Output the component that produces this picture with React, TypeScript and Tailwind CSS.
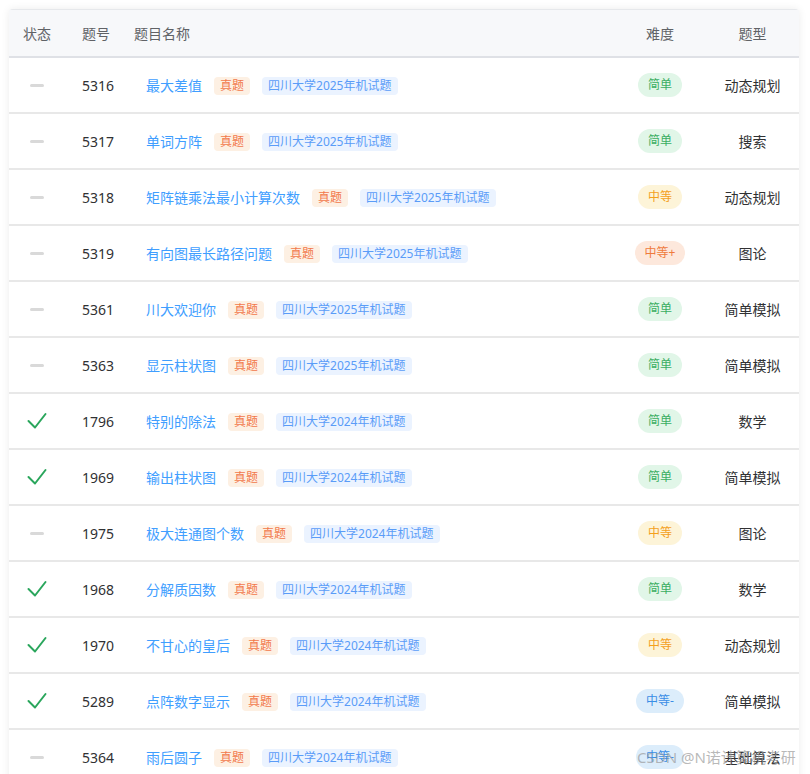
type Level = '简单' | '中等' | '中等+' | '中等-';

interface Problem {
  done: boolean;
  id: number;
  title: string;
  year: number;
  level: Level;
  kind: string;
}

const PROBLEMS: Problem[] = [
  { done: false, id: 5316, title: '最大差值', year: 2025, level: '简单', kind: '动态规划' },
  { done: false, id: 5317, title: '单词方阵', year: 2025, level: '简单', kind: '搜索' },
  { done: false, id: 5318, title: '矩阵链乘法最小计算次数', year: 2025, level: '中等', kind: '动态规划' },
  { done: false, id: 5319, title: '有向图最长路径问题', year: 2025, level: '中等+', kind: '图论' },
  { done: false, id: 5361, title: '川大欢迎你', year: 2025, level: '简单', kind: '简单模拟' },
  { done: false, id: 5363, title: '显示柱状图', year: 2025, level: '简单', kind: '简单模拟' },
  { done: true, id: 1796, title: '特别的除法', year: 2024, level: '简单', kind: '数学' },
  { done: true, id: 1969, title: '输出柱状图', year: 2024, level: '简单', kind: '简单模拟' },
  { done: false, id: 1975, title: '极大连通图个数', year: 2024, level: '中等', kind: '图论' },
  { done: true, id: 1968, title: '分解质因数', year: 2024, level: '简单', kind: '数学' },
  { done: true, id: 1970, title: '不甘心的皇后', year: 2024, level: '中等', kind: '动态规划' },
  { done: true, id: 5289, title: '点阵数字显示', year: 2024, level: '中等-', kind: '简单模拟' },
  { done: false, id: 5364, title: '雨后圆子', year: 2024, level: '中等-', kind: '基础算法' },
];

const LEVEL_STYLE: Record<Level, string> = {
  简单: 'bg-[#e1f6e8] text-[#3aae62]',
  中等: 'bg-[#fdf4d8] text-[#f4a01c]',
  '中等+': 'bg-[#fde8dc] text-[#ef7a3c]',
  '中等-': 'bg-[#dcedfb] text-[#3a8ee6]',
};

const COLS = 'grid grid-cols-[56px_57px_1fr_92px_93px] items-center';

function Check() {
  return (
    <svg width="20" height="18" viewBox="0 0 20 18" fill="none">
      <polyline
        points="1.5,9 8,15.5 18.5,2"
        stroke="#2aa65c"
        strokeWidth="2"
        strokeLinecap="round"
        strokeLinejoin="round"
      />
    </svg>
  );
}

function Row({ p }: { p: Problem }) {
  return (
    <div className={`${COLS} h-[56px] border-b-2 border-[#e8e8e8] text-[14px]`}>
      <div className="flex justify-center">
        {p.done ? <Check /> : <div className="w-[14px] h-[3px] rounded-full bg-[#d9d9d9]" />}
      </div>
      <div className="pl-[17px] text-[#303133]">{p.id}</div>
      <div className="flex items-center pl-6">
        <span className="text-[#409eff]">{p.title}</span>
        <span className="ml-3 mt-[2px] h-[18px] leading-[18px] px-1.5 rounded-[4px] bg-[#fdf0e3] text-[#f2784b] text-[12px]">
          真题
        </span>
        <span className="ml-3 mt-[2px] h-[18px] leading-[18px] px-1.5 rounded-[4px] bg-[#ebf3ff] text-[#5a9cf8] text-[12px]">
          四川大学{p.year}年机试题
        </span>
      </div>
      <div className="flex justify-center">
        <span className={`h-6 leading-6 px-2.5 rounded-full text-[12px] ${LEVEL_STYLE[p.level]}`}>
          {p.level}
        </span>
      </div>
      <div className="text-center text-[#303133]">{p.kind}</div>
    </div>
  );
}

export default function App() {
  return (
    <div
      className="relative min-h-screen bg-white pt-[9px] pl-[9px]"
      style={{ fontFamily: '"Noto Sans", "Noto Sans CJK SC", sans-serif' }}
    >
      <div className="w-[790px] rounded-t-[4px] bg-white border-t border-[#e6e8eb] shadow-[0_0_8px_rgba(0,0,0,0.08)]">
        {/* Header */}
        <div className={`${COLS} h-[48px] bg-[#f7f8fa] border-b-2 border-[#dfe1e6] text-[14px] text-[#606266]`}>
          <div className="text-center">状态</div>
          <div className="pl-[17px]">题号</div>
          <div className="pl-3">题目名称</div>
          <div className="text-center">难度</div>
          <div className="text-center">题型</div>
        </div>
        {PROBLEMS.map((p) => (
          <Row key={p.id} p={p} />
        ))}
      </div>

      {/* Watermark */}
      <div className="absolute left-[637px] top-[746px] text-[15px] text-[#9a9a9a]/70 whitespace-nowrap pointer-events-none">
        CSDN @N诺计算机考研
      </div>
    </div>
  );
}
